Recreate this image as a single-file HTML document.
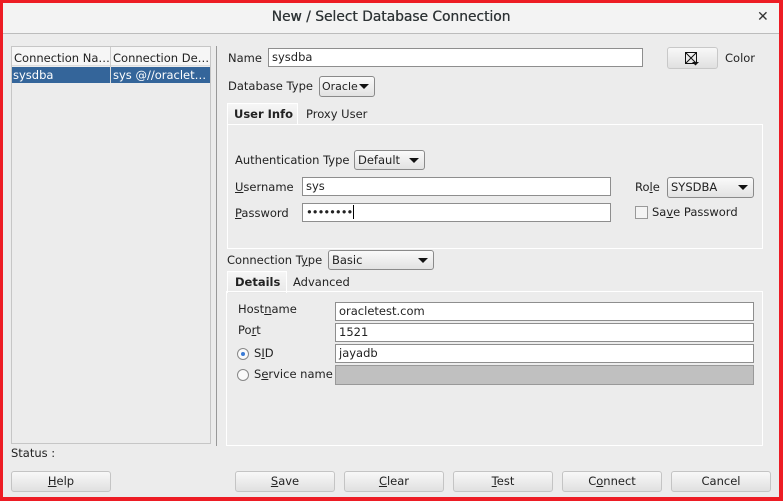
<!DOCTYPE html>
<html><head><meta charset="utf-8"><style>
*{box-sizing:border-box;margin:0;padding:0}
body{width:783px;height:501px;overflow:hidden;background:#ed1c24;font-family:"DejaVu Sans","Liberation Sans",sans-serif;font-size:11.5px;color:#222;position:relative}
#win{position:absolute;left:3px;top:3px;width:776px;height:494px;background:#ececec}
.a{position:absolute}
.t{position:absolute;white-space:nowrap;line-height:14px}
.in{position:absolute;background:#fff;border:1px solid #8e8e8e;padding-left:3px;line-height:16px;white-space:nowrap}
.sel{position:absolute;border:1px solid #8a8a8a;border-radius:3px;background:linear-gradient(#fafafa,#e2e2e2);padding-left:3px;padding-top:1px;line-height:17px;white-space:nowrap;overflow:hidden}
.sel:after{content:"";position:absolute;right:5px;top:7px;border-left:5px solid transparent;border-right:5px solid transparent;border-top:5px solid #111}
.btn{position:absolute;top:468px;width:100px;height:21px;border:1px solid #c4c4c4;border-radius:3px;background:linear-gradient(#f8f8f8,#e0e0e0);text-align:center;line-height:19px}
u{text-decoration:underline}
</style></head><body><div id="win">
<div class="a" style="left:0;top:0;width:776px;height:31px;background:#f3f3f3;border-bottom:1px solid #bcbcbc"></div>
<div class="t" style="left:0;width:776px;top:7px;text-align:center;font-size:13.8px;color:#2e3436;text-shadow:0.3px 0 0 #2e3436">New / Select Database Connection</div>
<div class="t" style="left:754px;top:7px;font-size:14px;font-weight:bold;color:#333">✕</div>

<div class="a" style="left:8px;top:43px;width:200px;height:398px;border:1px solid #c6c6c6;background:#ececec"></div>
<div class="a" style="left:9px;top:44px;width:198px;height:19px;background:#f6f6f6;border-bottom:1px solid #ddd"></div>
<div class="a" style="left:107px;top:44px;width:1px;height:36px;background:#ccc"></div>
<div class="t" style="left:11px;top:48px">Connection Na…</div>
<div class="t" style="left:110px;top:48px">Connection De…</div>
<div class="a" style="left:9px;top:64px;width:198px;height:16px;background:#34659a"></div>
<div class="a" style="left:107px;top:64px;width:1px;height:16px;background:#ddd"></div>
<div class="t" style="left:10px;top:65px;color:#fff">sysdba</div>
<div class="t" style="left:110px;top:65px;color:#fff">sys @//oraclet…</div>
<div class="a" style="left:213px;top:43px;width:1px;height:400px;background:#999"></div>

<div class="t" style="left:225px;top:48px">Name</div>
<div class="in" style="left:265px;top:45px;width:375px;height:19px">sysdba</div>
<div class="a" style="left:664px;top:44px;width:51px;height:22px;border:1px solid #c8c8c8;border-radius:3px;background:linear-gradient(#f8f8f8,#e0e0e0)"></div>
<svg class="a" style="left:681px;top:48px" width="16" height="15"><rect x="1.5" y="1.5" width="11" height="11" fill="none" stroke="#111"/><path d="M1.5 1.5L12.5 12.5M12.5 1.5L1.5 12.5" stroke="#111"/><path d="M8 11h7l-3.5 3.5z" fill="#111"/></svg>
<div class="t" style="left:722px;top:48px">Color</div>

<div class="t" style="left:225px;top:76px">Database Type</div>
<div class="sel" style="left:316px;top:73px;width:56px;height:21px;padding-left:2px;font-size:11px">Oracle</div>

<div class="a" style="left:224px;top:100px;width:71px;height:22px;border:1px solid #fff;border-bottom:none;background:linear-gradient(#f6f6f6,#e8e8e8)"></div>
<div class="t" style="left:231px;top:104px;font-weight:bold">User Info</div>
<div class="t" style="left:303px;top:104px">Proxy User</div>
<div class="a" style="left:224px;top:121px;width:536px;height:125px;border:1px solid #fff"></div>

<div class="t" style="left:232px;top:150px">Authentication Type</div>
<div class="sel" style="left:351px;top:147px;width:71px;height:20px">Default</div>
<div class="t" style="left:232px;top:177px"><u>U</u>sername</div>
<div class="in" style="left:299px;top:174px;width:309px;height:19px">sys</div>
<div class="t" style="left:232px;top:203px"><u>P</u>assword</div>
<div class="in" style="left:299px;top:200px;width:309px;height:19px;letter-spacing:-1px">••••••••<span style="border-left:1px solid #000;margin-left:1px"></span></div>
<div class="t" style="left:632px;top:177px">Ro<u>l</u>e</div>
<div class="sel" style="left:664px;top:174px;width:87px;height:21px">SYSDBA</div>
<div class="a" style="left:632px;top:203px;width:13px;height:13px;border:1px solid #999;background:#f4f4f4"></div>
<div class="t" style="left:649px;top:202px">Sa<u>v</u>e Password</div>

<div class="t" style="left:224px;top:250px">Connection T<u>y</u>pe</div>
<div class="sel" style="left:325px;top:247px;width:106px;height:20px">Basic</div>
<div class="a" style="left:224px;top:268px;width:60px;height:22px;border:1px solid #fff;border-bottom:none;background:linear-gradient(#f6f6f6,#e8e8e8)"></div>
<div class="t" style="left:232px;top:272px;font-weight:bold">Details</div>
<div class="t" style="left:290px;top:272px">Advanced</div>
<div class="a" style="left:223px;top:288px;width:537px;height:155px;border:1px solid #fff"></div>

<div class="t" style="left:235px;top:299px">Host<u>n</u>ame</div>
<div class="in" style="left:332px;top:299px;width:419px;height:19px">oracletest.com</div>
<div class="t" style="left:235px;top:320px">Po<u>r</u>t</div>
<div class="in" style="left:332px;top:320px;width:419px;height:19px">1521</div>
<div class="a" style="left:234px;top:345px;width:12px;height:12px;border:1px solid #888;border-radius:50%;background:#fafafa"></div>
<div class="a" style="left:238px;top:349px;width:4px;height:4px;border-radius:50%;background:#3a7bd5"></div>
<div class="t" style="left:251px;top:343px">S<u>I</u>D</div>
<div class="in" style="left:332px;top:341px;width:419px;height:19px">jayadb</div>
<div class="a" style="left:234px;top:366px;width:12px;height:12px;border:1px solid #888;border-radius:50%;background:#fafafa"></div>
<div class="t" style="left:251px;top:364px">S<u>e</u>rvice name</div>
<div class="a" style="left:332px;top:362px;width:419px;height:20px;background:#c0c0c0;border:1px solid #999"></div>

<div class="t" style="left:8px;top:443px">Status :</div>
<div class="btn" style="left:8px"><u>H</u>elp</div>
<div class="btn" style="left:232px"><u>S</u>ave</div>
<div class="btn" style="left:341px"><u>C</u>lear</div>
<div class="btn" style="left:450px"><u>T</u>est</div>
<div class="btn" style="left:559px">C<u>o</u>nnect</div>
<div class="btn" style="left:668px">Cancel</div>
</div></body></html>
